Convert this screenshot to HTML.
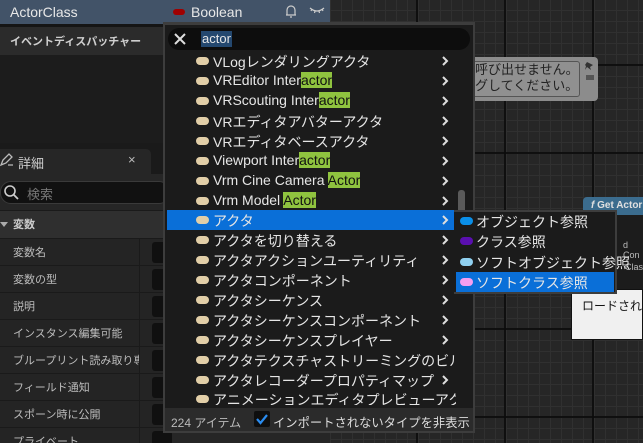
<!DOCTYPE html>
<html style="overflow:hidden;height:443px"><head><meta charset="utf-8"><style>
*{margin:0;padding:0;box-sizing:border-box}
body{width:643px;height:443px;overflow:hidden;position:relative;font-family:"Liberation Sans","Noto Sans CJK JP",sans-serif;background:#262626;color:#c8c8c8}
.abs{position:absolute}
#graph{left:330px;top:0;width:313px;height:443px;background-color:#262626;
background-image:linear-gradient(90deg,rgba(12,12,12,.9) 2px,transparent 2px),linear-gradient(0deg,rgba(12,12,12,.9) 2px,transparent 2px),linear-gradient(90deg,#303030 1px,transparent 1px),linear-gradient(0deg,#303030 1px,transparent 1px);
background-size:88px 88px,88px 88px,11px 11px,11px 11px;background-position:-2px -22px,0 -22px,0 0,0 0}
.row{position:absolute;left:0;width:164px;height:27px;border-top:1px solid #1a1a1a;background:#242424}
.row span{position:absolute;left:13px;top:5px;font-size:11px;color:#bdbdbd;white-space:nowrap;width:126px;overflow:hidden}
.row i{position:absolute;left:139px;top:0;width:1px;height:27px;background:#1a1a1a}
.row b{position:absolute;left:152px;top:3px;width:20px;height:21px;background:#101010;border-radius:3px}
.it{position:absolute;left:167px;width:288px;height:20px;font-size:14px;color:#e6e6e6;white-space:nowrap}
.it .p{position:absolute;left:29px;top:6px;width:13px;height:8px;border-radius:4px;background:#e2cfa8}
.it .t{position:absolute;left:46px;top:1px}
.it svg{position:absolute;left:274px;top:5px}
.hl{background:#8fc33f;color:#111}
.sub{position:absolute;left:456px;width:158px;height:20px;font-size:14px;color:#e6e6e6;white-space:nowrap}
.sub .p{position:absolute;left:4px;top:6px;width:13px;height:8px;border-radius:4px}
.sub .t{position:absolute;left:20px;top:1px}
</style></head><body>
<svg width="0" height="0" style="position:absolute"><defs><symbol id="ch" viewBox="0 0 8 10"><path d="M2 1l4 4-4 4" stroke="#ddd" fill="none" stroke-width="2"/></symbol></defs></svg>
<div id="graph" class="abs"></div>
<div class="abs" style="left:470px;top:57px;width:128px;height:44px;background:#8c8c8c;border-radius:4px"></div>
<div class="abs" style="left:472px;top:61px;width:108px;height:36px;border:1px solid #555;border-radius:3px;background:#909090;font-size:13px;color:#222;line-height:16px;padding-left:2px;white-space:nowrap;overflow:hidden">呼び出せません。<br>グしてください。</div>
<svg class="abs" style="left:584px;top:60px" width="12" height="22" viewBox="0 0 12 22"><path d="M3 2l6 3-3 2 1 3-4-3-2 3 1-4-1-1z" fill="#333"/><rect x="2" y="15" width="8" height="5" fill="#555"/></svg>
<div class="abs" style="left:583px;top:197px;width:60px;height:18px;background:#3b6c8e;border-radius:4px 0 0 0;font-size:10px;color:#e0e0e0;padding:3px 0 0 8px;white-space:nowrap;font-weight:bold"><i style="font-style:italic">f</i> Get Actor</div>
<div class="abs" style="left:583px;top:215px;width:60px;height:80px;background:#1c1c1c"></div>
<div class="abs" style="left:623px;top:240px;font-size:9px;color:#bbb">d Con</div>
<div class="abs" style="left:625px;top:262px;font-size:9px;color:#bbb">Clas</div>
<div class="abs" style="left:571px;top:289px;width:72px;height:51px;background:#f0f0f0;border:1px solid #111;font-size:12px;color:#111;padding:7px 0 0 10px;white-space:nowrap;overflow:hidden">ロードされて</div>

<div class="abs" style="left:0;top:0;width:330px;height:24px;background:#425368"></div>
<div class="abs" style="left:10px;top:4px;font-size:14px;color:#e8e8e8">ActorClass</div>
<div class="abs" style="left:173px;top:9px;width:12px;height:6px;border-radius:3px;background:#a00000"></div>
<div class="abs" style="left:191px;top:4px;font-size:14px;color:#e8e8e8">Boolean</div>
<svg class="abs" style="left:283px;top:3px" width="16" height="16" viewBox="0 0 16 16"><path d="M4 12V7a4 4 0 0 1 8 0v5M3 12h10M7 14h2" stroke="#ccc" fill="none" stroke-width="1.2"/></svg>
<svg class="abs" style="left:309px;top:4px" width="16" height="12" viewBox="0 0 16 12"><path d="M1 4q7 6 14 0M3 5l-1 2M6 7l-.5 2M10 7l.5 2M13 5l1 2" stroke="#ccc" fill="none" stroke-width="1.2"/></svg>
<div class="abs" style="left:0;top:24px;width:330px;height:3px;background:#151515"></div>
<div class="abs" style="left:0;top:27px;width:164px;height:28px;background:#2b2b2b"></div>
<div class="abs" style="left:10px;top:33px;font-size:11px;font-weight:bold;color:#cfcfcf">イベントディスパッチャー</div>
<div class="abs" style="left:0;top:55px;width:164px;height:88px;background:#1c1c1c"></div>
<div class="abs" style="left:0;top:143px;width:164px;height:300px;background:#1a1a1a"></div>
<div class="abs" style="left:0;top:149px;width:151px;height:25px;background:#262626;border-radius:0 5px 0 0"></div>
<svg class="abs" style="left:0;top:153px" width="14" height="14" viewBox="0 0 14 14"><path d="M1 12l2-5 6-6 3 3-6 6zM8 12h5" stroke="#bbb" fill="none" stroke-width="1.3"/></svg>
<div class="abs" style="left:18px;top:153px;font-size:13px;color:#ccc">詳細</div>
<div class="abs" style="left:128px;top:152px;font-size:13px;color:#bbb">×</div>
<div class="abs" style="left:0;top:174px;width:164px;height:36px;background:#262626"></div>
<div class="abs" style="left:0;top:181px;width:170px;height:23px;background:#111;border-radius:11px;border:1px solid #3a3a3a"></div>
<svg class="abs" style="left:3px;top:184px" width="17" height="17" viewBox="0 0 17 17"><circle cx="7" cy="7" r="5" stroke="#ccc" fill="none" stroke-width="1.6"/><path d="M11 11l4 4" stroke="#ccc" stroke-width="1.8"/></svg>
<div class="abs" style="left:27px;top:184px;font-size:13px;color:#777">検索</div>
<div class="abs" style="left:0;top:211px;width:164px;height:27px;background:#2f2f2f"></div>
<div class="abs" style="left:0;top:222px;width:0;height:0;border-left:4px solid transparent;border-right:4px solid transparent;border-top:5px solid #aaa"></div>
<div class="abs" style="left:13px;top:216px;font-size:11px;font-weight:bold;color:#ccc">変数</div>
<div class="row" style="top:238px"><span>変数名</span><i></i><b></b></div>
<div class="row" style="top:265px"><span>変数の型</span><i></i><b></b></div>
<div class="row" style="top:292px"><span>説明</span><i></i><b></b></div>
<div class="row" style="top:319px"><span>インスタンス編集可能</span><i></i><b></b></div>
<div class="row" style="top:346px"><span>ブループリント読み取り専用</span><i></i><b></b></div>
<div class="row" style="top:373px"><span>フィールド通知</span><i></i><b></b></div>
<div class="row" style="top:400px"><span>スポーン時に公開</span><i></i><b></b></div>
<div class="row" style="top:427px;height:16px"><span>プライベート</span><i></i><b></b></div>

<div class="abs" style="left:163px;top:22px;width:312px;height:411px;background:#1b1b1b;border:2px solid #3d3d3d;border-top-width:3px;overflow:hidden">
 <div class="abs" style="left:3px;top:3px;width:302px;height:22px;background:#0d0d0d;border-radius:11px"></div>
 <svg class="abs" style="left:8px;top:7px" width="14" height="14" viewBox="0 0 14 14"><path d="M2 2l10 10M12 2L2 12" stroke="#ddd" stroke-width="2"/></svg>
 <div class="abs" style="left:36px;top:6px;height:16px;background:#24486f;font-size:13px;color:#e6e6e6;padding:0 1px;line-height:16px">actor</div>
 <div class="abs" style="left:293px;top:165px;width:7px;height:27px;background:#5a5a5a;border-radius:3px"></div>
 <div class="abs" style="left:0;top:383px;width:310px;height:26px;background:#2b2b2b"></div>
 <div class="abs" style="left:6px;top:389px;font-size:12px;color:#bbb">224 アイテム</div>
 <div class="abs" style="left:89px;top:386px;width:16px;height:16px;background:#0e0e0e;border-radius:2px"></div>
 <svg class="abs" style="left:90px;top:387px" width="14" height="14" viewBox="0 0 14 14"><path d="M2 7l3.5 4L12 3" stroke="#2a8cf0" fill="none" stroke-width="2.2"/></svg>
 <div class="abs" style="left:108px;top:388px;font-size:12.3px;color:#ddd;white-space:nowrap">インポートされないタイプを非表示</div>
</div>
<div class="it" style="top:51px"><span class="p"></span><span class="t">VLogレンダリングアクタ</span><svg width="8" height="10"><use href="#ch"/></svg></div>
<div class="it" style="top:71px"><span class="p"></span><span class="t">VREditor Inter<span class="hl">actor</span></span><svg width="8" height="10"><use href="#ch"/></svg></div>
<div class="it" style="top:91px"><span class="p"></span><span class="t">VRScouting Inter<span class="hl">actor</span></span><svg width="8" height="10"><use href="#ch"/></svg></div>
<div class="it" style="top:111px"><span class="p"></span><span class="t">VRエディタアバターアクタ</span><svg width="8" height="10"><use href="#ch"/></svg></div>
<div class="it" style="top:131px"><span class="p"></span><span class="t">VRエディタベースアクタ</span><svg width="8" height="10"><use href="#ch"/></svg></div>
<div class="it" style="top:151px"><span class="p"></span><span class="t">Viewport Inter<span class="hl">actor</span></span><svg width="8" height="10"><use href="#ch"/></svg></div>
<div class="it" style="top:171px"><span class="p"></span><span class="t">Vrm Cine Camera <span class="hl">Actor</span></span><svg width="8" height="10"><use href="#ch"/></svg></div>
<div class="it" style="top:191px"><span class="p"></span><span class="t">Vrm Model <span class="hl">Actor</span></span><svg width="8" height="10"><use href="#ch"/></svg></div>
<div class="it" style="top:210px;background:#0a6fd8;width:290px"><span class="p"></span><span class="t">アクタ</span><svg width="8" height="10"><use href="#ch"/></svg></div>
<div class="it" style="top:230px"><span class="p"></span><span class="t">アクタを切り替える</span><svg width="8" height="10"><use href="#ch"/></svg></div>
<div class="it" style="top:250px"><span class="p"></span><span class="t">アクタアクションユーティリティ</span><svg width="8" height="10"><use href="#ch"/></svg></div>
<div class="it" style="top:270px"><span class="p"></span><span class="t">アクタコンポーネント</span><svg width="8" height="10"><use href="#ch"/></svg></div>
<div class="it" style="top:290px"><span class="p"></span><span class="t">アクタシーケンス</span><svg width="8" height="10"><use href="#ch"/></svg></div>
<div class="it" style="top:310px"><span class="p"></span><span class="t">アクタシーケンスコンポーネント</span><svg width="8" height="10"><use href="#ch"/></svg></div>
<div class="it" style="top:330px"><span class="p"></span><span class="t">アクタシーケンスプレイヤー</span><svg width="8" height="10"><use href="#ch"/></svg></div>
<div class="it" style="top:350px;overflow:hidden;width:289px"><span class="p"></span><span class="t">アクタテクスチャストリーミングのビルド</span></div>
<div class="it" style="top:370px"><span class="p"></span><span class="t">アクタレコーダープロパティマップ</span><svg width="8" height="10"><use href="#ch"/></svg></div>
<div class="it" style="top:389px;overflow:hidden;width:289px;height:16px"><span class="p"></span><span class="t">アニメーションエディタプレビューアクタ</span></div>

<div class="abs" style="left:454px;top:210px;width:163px;height:84px;background:#1b1b1b;border:2px solid #3d3d3d;border-left:none"></div>
<div class="sub" style="top:211px"><span class="p" style="background:#0a8fe8"></span><span class="t">オブジェクト参照</span></div>
<div class="sub" style="top:231px"><span class="p" style="background:#5a0fb0"></span><span class="t">クラス参照</span></div>
<div class="sub" style="top:252px"><span class="p" style="background:#8fd0f0"></span><span class="t">ソフトオブジェクト参照</span></div>
<div class="sub" style="top:272px;background:#0a6fd8;height:20px"><span class="p" style="background:#f59ef0"></span><span class="t">ソフトクラス参照</span></div>
</body></html>
